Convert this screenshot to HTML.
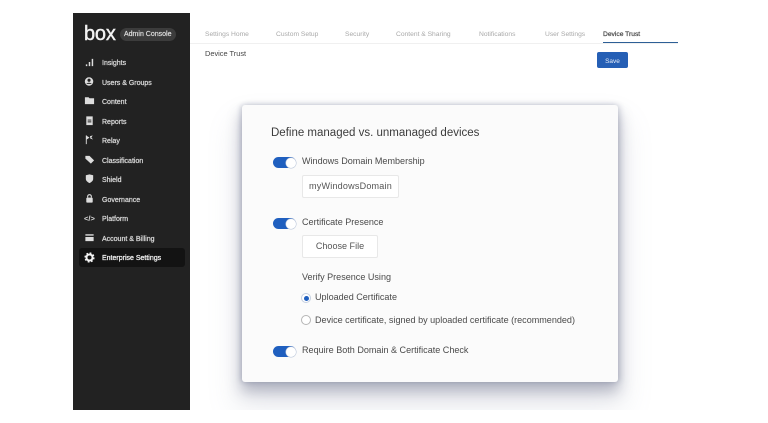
<!DOCTYPE html>
<html><head><meta charset="utf-8">
<style>
html,body{margin:0;padding:0;background:#fff}
body{width:768px;height:423px;position:relative;overflow:hidden;font-family:"Liberation Sans",sans-serif}
#wrap{position:absolute;left:0;top:0;width:768px;height:423px;filter:blur(.35px)}
.t{position:absolute;white-space:nowrap;line-height:12px}
#side{position:absolute;left:73px;top:13px;width:117px;height:397px;background:#222}
.n{position:absolute;left:102px;color:#d8d8d8;font-size:7px;-webkit-text-stroke:.25px #d8d8d8;white-space:nowrap;line-height:10px;margin-top:.6px}
.ic{position:absolute;left:84px;width:11px;height:11px}
.tab{position:absolute;top:28.500px;font-size:6.700px;color:#a9a9a9;line-height:12px;white-space:nowrap}
#main{position:absolute;left:190px;top:13px;width:578px;height:397px;overflow:hidden}
#card{position:absolute;left:52px;top:92px;width:376px;height:277px;background:#fbfbfb;border-radius:3px;box-shadow:0 9px 14px 1px rgba(110,115,140,.45),0 22px 30px 6px rgba(130,135,160,.16),-2px 0 5px rgba(130,135,160,.3),2px 0 6px rgba(130,135,160,.3)}
.tg{position:absolute;left:273px;width:23px;height:11px;border-radius:6px;background:#1f5fbf}
.tg i{position:absolute;right:.5px;top:.5px;width:10px;height:10px;border-radius:50%;background:#fff;box-shadow:0 0 0 .5px #b8c4d8}
.l{position:absolute;color:#4a4a4a;font-size:9.050px;white-space:nowrap;line-height:12px}
.box{position:absolute;background:#fff;border:1px solid #e8e8e8;border-radius:2px;color:#555;text-align:center;box-sizing:border-box;white-space:nowrap}
</style></head><body>
<div id="wrap">
<div id="side"></div>
<div style="position:absolute;left:79px;top:248px;width:106px;height:19px;background:#131313;border-radius:3px"></div>

<div class="t" style="left:84px;top:20.500px;font-size:20px;line-height:26px;color:#f2f2f2;letter-spacing:-.2px;-webkit-text-stroke:.4px #f2f2f2">box</div>
<div style="position:absolute;left:120px;top:28px;width:56px;height:13px;border-radius:7px;background:#3c3c3c"></div>
<div class="t" style="left:124px;top:29px;font-size:7px;-webkit-text-stroke:.2px #ddd;line-height:11px;color:#ddd">Admin Console</div>

<svg class="ic" style="top:57px" viewBox="0 0 12 12"><path d="M2 8h1.600v2H2zM5.200 5.500h1.600V10H5.200zM8.400 2h1.600v8H8.400z" fill="#ddd"/></svg>
<svg class="ic" style="top:76px" viewBox="0 0 12 12"><circle cx="5.500" cy="6" r="4.600" fill="#ddd"/><circle cx="5.500" cy="4.600" r="1.700" fill="#222"/><path d="M2.600 8.600c1-1.600 4.800-1.600 5.800 0z" fill="#222"/></svg>
<svg class="ic" style="top:95px" viewBox="0 0 12 12"><path d="M1 2.500h4l1 1h5v6.500H1z" fill="#ddd"/></svg>
<svg class="ic" style="top:115px" viewBox="0 0 12 12"><path d="M2.500 1.500h7v9.500h-7z" fill="#ddd"/><path d="M4 5h4v1H4zM4 7h4v1H4z" fill="#222"/></svg>
<svg class="ic" style="top:134px" viewBox="0 0 12 12"><path d="M2 1.500h1v9.500H2zM3 2l3 2-3 2zM6.500 2.500l3-1-1.500 2.500 2 2-3-1z" fill="#ddd"/></svg>
<svg class="ic" style="top:154px" viewBox="0 0 12 12"><path d="M1.500 2h4.500l5 5-3.500 3.500-6-5.500z" fill="#ddd"/></svg>
<svg class="ic" style="top:173px" viewBox="0 0 12 12"><path d="M2 2.500l4-1 4 1v4c0 2-2 3.500-4 4.500-2-1-4-2.500-4-4.500z" fill="#ddd"/></svg>
<svg class="ic" style="top:193px" viewBox="0 0 12 12"><rect x="2.500" y="5" width="7" height="5.500" rx="1" fill="#ddd"/><path d="M4 5V3.800a2 2 0 0 1 4 0V5" fill="none" stroke="#ddd" stroke-width="1.200"/></svg>
<div class="t" style="left:84px;top:213px;font-size:7.500px;font-weight:bold;color:#ddd;line-height:11px">&lt;/&gt;</div>
<svg class="ic" style="top:232px" viewBox="0 0 12 12"><path d="M1.500 2.500h9V4h-9zM1.500 5.500h9V10h-9z" fill="#ddd"/></svg>
<svg class="ic" style="top:252px" viewBox="0 0 12 12"><circle cx="6" cy="6" r="3.300" fill="none" stroke="#f4f4f4" stroke-width="2.200"/><circle cx="6" cy="6" r="4.800" fill="none" stroke="#f4f4f4" stroke-width="1.500" stroke-dasharray="2 1.770"/></svg>

<div class="n" style="top:58px">Insights</div>
<div class="n" style="top:78px">Users &amp; Groups</div>
<div class="n" style="top:97px">Content</div>
<div class="n" style="top:117px">Reports</div>
<div class="n" style="top:136px">Relay</div>
<div class="n" style="top:156px">Classification</div>
<div class="n" style="top:175px">Shield</div>
<div class="n" style="top:195px">Governance</div>
<div class="n" style="top:214px">Platform</div>
<div class="n" style="top:234px">Account &amp; Billing</div>
<div class="n" style="top:253px;color:#f2f2f2;-webkit-text-stroke:.25px #f2f2f2">Enterprise Settings</div>

<div id="main"><div id="card"></div></div>

<div style="position:absolute;left:190px;top:43px;width:488px;height:1px;background:#f0f0f0"></div>
<div class="tab" style="left:205px">Settings Home</div>
<div class="tab" style="left:276px">Custom Setup</div>
<div class="tab" style="left:345px">Security</div>
<div class="tab" style="left:396px">Content &amp; Sharing</div>
<div class="tab" style="left:479px">Notifications</div>
<div class="tab" style="left:545px">User Settings</div>
<div class="tab" style="left:603px;color:#444;-webkit-text-stroke:.2px #444">Device Trust</div>
<div style="position:absolute;left:603px;top:42px;width:75px;height:1px;background:#2d5f96"></div>
<div class="t" style="left:205px;top:48px;font-size:7.400px;color:#444">Device Trust</div>
<div style="position:absolute;left:597px;top:52px;width:31px;height:16px;background:#255fb5;border-radius:2px;color:#e8eefa;font-size:6.500px;line-height:17px;padding-top:.5px;box-sizing:border-box;text-align:center">Save</div>

<div class="t" style="left:271px;top:126px;font-size:11.500px;line-height:14px;color:#3c3c3c">Define managed vs. unmanaged devices</div>

<div class="tg" style="top:157px"><i></i></div>
<div class="l" style="left:302px;top:155px">Windows Domain Membership</div>
<div class="box" style="left:302px;top:175px;width:97px;height:23px;font-size:9.050px;line-height:21px;letter-spacing:.2px">myWindowsDomain</div>

<div class="tg" style="top:218px"><i></i></div>
<div class="l" style="left:302px;top:216px">Certificate Presence</div>
<div class="box" style="left:302px;top:235px;width:76px;height:23px;font-size:9.050px;line-height:21px">Choose File</div>

<div class="l" style="left:302px;top:271px">Verify Presence Using</div>

<div style="position:absolute;left:301px;top:293px;width:10px;height:10px;border-radius:50%;background:#fff;border:1px solid #c4cfe0;box-sizing:border-box"></div>
<div style="position:absolute;left:303.500px;top:295.500px;width:5px;height:5px;border-radius:50%;background:#1f5fbf"></div>
<div class="l" style="left:315px;top:291px">Uploaded Certificate</div>

<div style="position:absolute;left:301px;top:315px;width:10px;height:10px;border-radius:50%;background:#fff;border:1px solid #b5b5b5;box-sizing:border-box"></div>
<div class="l" style="left:315px;top:314px">Device certificate, signed by uploaded certificate (recommended)</div>

<div class="tg" style="top:346px"><i></i></div>
<div class="l" style="left:302px;top:344px">Require Both Domain &amp; Certificate Check</div>
</div>
</body></html>
